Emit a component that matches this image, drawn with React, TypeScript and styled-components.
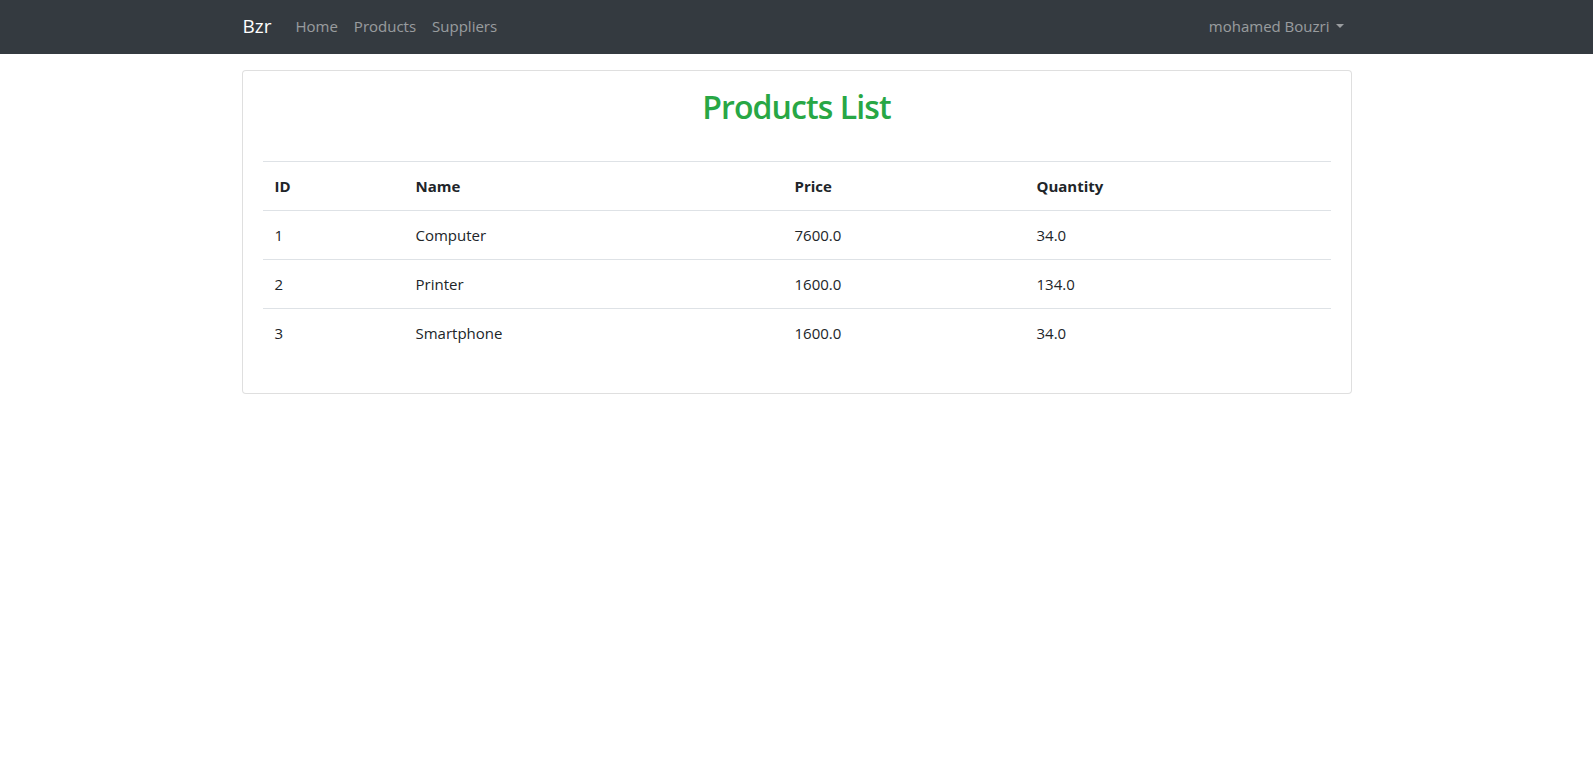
import React from "react";
import styled, { createGlobalStyle } from "styled-components";

const GlobalStyle = createGlobalStyle`
  html, body {
    margin: 0;
    padding: 0;
    background: #ffffff;
  }
  body {
    font-family: "Open Sans", "Noto Sans", "Liberation Sans", sans-serif;
    font-size: 15px;
    line-height: 24px;
    color: #212529;
  }
  * { box-sizing: border-box; }
`;

const NavBar = styled.nav`
  background: #343a40;
  height: 54px;
  padding-bottom: 2px;
  display: flex;
  align-items: center;
`;

const NavInner = styled.div`
  width: 1110px;
  margin: 0 auto;
  display: flex;
  align-items: center;
  justify-content: space-between;
`;

const NavLeft = styled.div`
  display: flex;
  align-items: center;
`;

const Brand = styled.a`
  color: #ffffff;
  font-size: 19px;
  line-height: 30px;
  padding: 5px 0 5px 1px;
  margin-right: 16px;
  text-decoration: none;
  white-space: nowrap;
`;

const NavList = styled.ul`
  display: flex;
  list-style: none;
  margin: 0;
  padding: 0;
`;

const NavLink = styled.a<{ $toggle?: boolean }>`
  display: block;
  padding: 8px;
  color: rgba(255, 255, 255, 0.5);
  text-decoration: none;
  white-space: nowrap;
  cursor: pointer;
  ${(p) =>
    p.$toggle &&
    `
    &::after {
      content: "";
      display: inline-block;
      margin-left: 6px;
      vertical-align: 0.255em;
      border-top: 0.3em solid;
      border-right: 0.3em solid transparent;
      border-left: 0.3em solid transparent;
      border-bottom: 0;
    }
  `}
`;

const Container = styled.main`
  width: 1110px;
  margin: 16px auto 0;
`;

const Card = styled.section`
  border: 1px solid rgba(0, 0, 0, 0.125);
  border-radius: 4px;
  padding: 20px;
  background: #fff;
`;

const Title = styled.h2`
  margin: 0 0 39px;
  text-align: center;
  color: #28a745;
  font-size: 32px;
  font-weight: 600;
  line-height: 31px;
  letter-spacing: -0.9px;
`;

const Table = styled.table`
  width: 100%;
  border-collapse: collapse;
  table-layout: fixed;
  margin-bottom: 16px;
`;

const Col = styled.col<{ $w?: number }>`
  width: ${(p) => (p.$w ? `${p.$w}px` : "auto")};
`;

const Th = styled.th`
  text-align: left;
  font-weight: 700;
  padding: 12px;
  border-top: 1px solid #dee2e6;
  vertical-align: top;
`;

const Td = styled.td`
  padding: 12px;
  border-top: 1px solid #dee2e6;
  vertical-align: top;
`;

const products = [
  { id: 1, name: "Computer", price: "7600.0", quantity: "34.0" },
  { id: 2, name: "Printer", price: "1600.0", quantity: "134.0" },
  { id: 3, name: "Smartphone", price: "1600.0", quantity: "34.0" },
];

export default function App() {
  return (
    <>
      <GlobalStyle />
      <NavBar>
        <NavInner>
          <NavLeft>
            <Brand href="#">Bzr</Brand>
            <NavList>
              <li><NavLink>Home</NavLink></li>
              <li><NavLink>Products</NavLink></li>
              <li><NavLink>Suppliers</NavLink></li>
            </NavList>
          </NavLeft>
          <NavList>
            <li><NavLink $toggle>mohamed Bouzri</NavLink></li>
          </NavList>
        </NavInner>
      </NavBar>
      <Container>
        <Card>
          <Title>Products List</Title>
          <Table>
            <colgroup>
              <Col $w={141} />
              <Col $w={379} />
              <Col $w={242} />
              <Col />
            </colgroup>
            <thead>
              <tr>
                <Th>ID</Th>
                <Th>Name</Th>
                <Th>Price</Th>
                <Th>Quantity</Th>
              </tr>
            </thead>
            <tbody>
              {products.map((p) => (
                <tr key={p.id}>
                  <Td>{p.id}</Td>
                  <Td>{p.name}</Td>
                  <Td>{p.price}</Td>
                  <Td>{p.quantity}</Td>
                </tr>
              ))}
            </tbody>
          </Table>
        </Card>
      </Container>
    </>
  );
}
